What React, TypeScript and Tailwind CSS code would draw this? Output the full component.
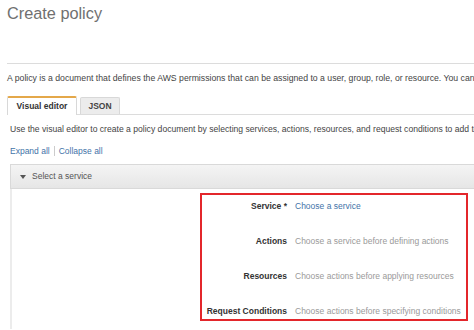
import React from "react";

export default function App() {
  const rows: { label: string; value: string; link?: boolean }[] = [
    { label: "Service *", value: "Choose a service", link: true },
    { label: "Actions", value: "Choose a service before defining actions" },
    { label: "Resources", value: "Choose actions before applying resources" },
    { label: "Request Conditions", value: "Choose actions before specifying conditions" },
  ];
  return (
    <div
      className="w-[474px] h-[330px] overflow-hidden bg-white relative"
      style={{ fontFamily: '"Liberation Sans", Arial, sans-serif' }}
    >
      <div className="pl-[7px] pt-[3px] text-[16.3px] leading-[20px] text-[#707070] whitespace-nowrap">
        Create policy
      </div>
      <div className="ml-[7px] mt-[40px] h-px bg-[#dcdcdc]" />
      <div className="pl-[7px] mt-[8px] text-[8.7px] leading-[12px] text-[#444] whitespace-nowrap">
        A policy is a document that defines the AWS permissions that can be assigned to a user, group, role, or resource. You can
      </div>
      <div className="ml-[7px] mt-[12px] flex items-end h-[19px] border-b border-[#dcdcdc]">
        <div className="w-[70px] h-[19px] -mb-px bg-white border-x border-t-2 border-[#d8d8d8] border-t-[#e4a84a] rounded-t-[2px] flex items-center justify-center text-[8.5px] font-bold text-[#333]">
          Visual editor
        </div>
        <div className="ml-[3px] w-[40px] h-[17px] bg-[#ececec] border-x border-t border-[#d8d8d8] rounded-t-[2px] flex items-center justify-center text-[8.5px] font-bold text-[#444]">
          JSON
        </div>
      </div>
      <div className="pl-[10px] mt-[8px] text-[8.6px] leading-[12px] text-[#444] whitespace-nowrap">
        Use the visual editor to create a policy document by selecting services, actions, resources, and request conditions to add to
      </div>
      <div className="pl-[10px] mt-[10px] text-[8.5px] leading-[12px] text-[#3f73a8] whitespace-nowrap flex items-center">
        <span>Expand all</span>
        <span className="mx-[4px] w-px h-[10px] bg-[#ccc]" />
        <span>Collapse all</span>
      </div>
      <div className="ml-[10px] mt-[7px]">
        <div className="h-[25px] border border-r-0 border-[#d9d9d9] bg-gradient-to-b from-[#f4f4f4] to-[#e6e6e6] flex items-center pl-[9px] text-[8.5px] text-[#555] whitespace-nowrap">
          <svg width="6" height="4" viewBox="0 0 6 4" className="mr-[6px]">
            <path d="M0 0 L6 0 L3 4 Z" fill="#555" />
          </svg>
          Select a service
        </div>
        <div className="border-l-2 border-[#ececec] pl-[188px] pt-[4px] pb-[8px]">
          <div className="w-[268px] h-[128px] border-2 border-[#e3262b] pt-[5px] flex flex-col gap-[23px]">
            {rows.map((r) => (
              <div key={r.label} className="flex items-center h-[12px] text-[8.5px] leading-[12px] whitespace-nowrap">
                <div className="w-[85px] text-right font-bold text-[#333]">{r.label}</div>
                <div className={"ml-[8px] " + (r.link ? "text-[#3f73a8]" : "text-[#9a9a9a]")}>{r.value}</div>
              </div>
            ))}
          </div>
        </div>
      </div>
    </div>
  );
}
